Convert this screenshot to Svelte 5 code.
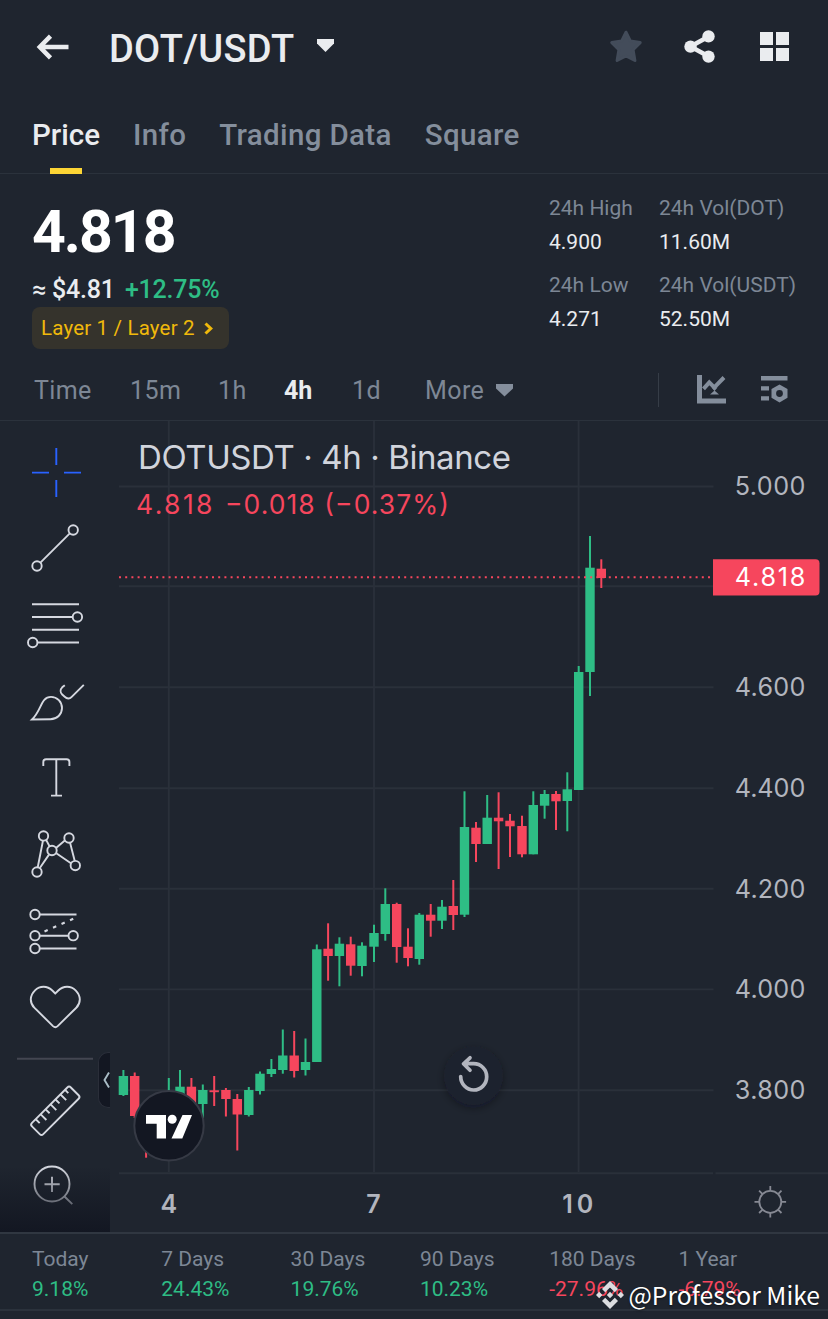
<script>
  const tabs = ['Price', 'Info', 'Trading Data', 'Square'];

  const stats = [
    { label: '24h High', value: '4.900' },
    { label: '24h Vol(DOT)', value: '11.60M' },
    { label: '24h Low', value: '4.271' },
    { label: '24h Vol(USDT)', value: '52.50M' }
  ];

  const intervals = ['Time', '15m', '1h', '4h', '1d', 'More'];

  const periods = [
    { label: 'Today', value: '9.18%' },
    { label: '7 Days', value: '24.43%' },
    { label: '30 Days', value: '19.76%' },
    { label: '90 Days', value: '10.23%' },
    { label: '180 Days', value: '-27.96%' },
    { label: '1 Year', value: '-6.79%' }
  ];

  const priceLines = [
    { y: 486.5, label: '5.000' },
    { y: 586.3, label: '4.800' },
    { y: 687.3, label: '4.600' },
    { y: 788.2, label: '4.400' },
    { y: 888.8, label: '4.200' },
    { y: 989.4, label: '4.000' },
    { y: 1090.2, label: '3.800' }
  ];

  const dayLines = [
    { x: 168.8, label: '4', w: 15 },
    { x: 374, label: '7', w: 14 },
    { x: 578.6, label: '10', w: 31 }
  ];

  // centre x, body top, body bottom, wick top, wick bottom, rising
  const candles = [
    [123.4, 1076, 1095, 1070, 1096, 1],
    [134.7, 1076, 1116, 1072.5, 1118, 0],
    [146.1, 1116, 1140, 1112, 1157.7, 0],
    [168.8, 1095, 1120, 1078, 1125, 1],
    [180, 1086.7, 1110, 1070, 1112, 1],
    [191.4, 1086.7, 1104, 1078, 1106, 0],
    [202.8, 1090, 1104, 1084.5, 1118, 1],
    [214.2, 1090.3, 1092.2, 1076, 1106, 0],
    [225.9, 1090, 1099, 1088, 1116.5, 0],
    [237.3, 1099, 1114.5, 1094, 1150.5, 0],
    [248.8, 1090, 1115, 1087, 1116.5, 1],
    [260, 1073.7, 1091, 1071.5, 1094.5, 1],
    [271.4, 1069, 1074, 1059, 1077, 1],
    [282.8, 1055.5, 1070, 1029.5, 1073.7, 1],
    [294.2, 1055.5, 1071, 1031, 1077.5, 0],
    [305.5, 1062, 1070, 1038.5, 1075.5, 1],
    [316.8, 949.3, 1062, 944.5, 1062, 1],
    [328.1, 948.7, 956, 923.3, 980.7, 0],
    [339.4, 943.7, 956, 937.3, 986.3, 1],
    [350.7, 944.3, 965.7, 936.7, 975.7, 0],
    [362, 945.7, 966, 942.3, 976.3, 1],
    [374, 933, 946.7, 924.7, 962, 1],
    [385.3, 904, 934, 888.3, 940.7, 1],
    [396.7, 904, 947, 902.7, 962.7, 0],
    [408, 946.7, 958, 928.3, 966.3, 0],
    [419.3, 914.7, 959, 913, 964.7, 1],
    [430.7, 914.7, 920.7, 904, 936.7, 0],
    [442, 906.7, 920.7, 900, 929, 1],
    [453.3, 906, 915, 880, 930, 0],
    [464.5, 827, 914.7, 791.3, 917, 1],
    [476, 827.7, 844, 822, 862, 0],
    [487.2, 817.7, 844, 795, 844, 1],
    [498.6, 817.7, 821.3, 792.3, 869, 0],
    [510, 820.7, 826.3, 814, 857, 0],
    [522, 826, 854.3, 815.7, 857.3, 0],
    [533.3, 805, 854.3, 791.3, 854.3, 1],
    [544.6, 794, 805.7, 790, 818.7, 1],
    [556, 794, 801.3, 791, 830, 0],
    [567.3, 789.3, 801, 772.3, 831.3, 1],
    [578.7, 672, 790, 666, 790, 1],
    [590, 567.7, 672, 536, 696, 1],
    [601.3, 568.7, 578, 559.3, 588, 0]
  ];
</script>

<main class="screen">
  <header class="topbar">
    <svg class="back" width="33" height="26" viewBox="0 0 33 26"><path d="M14.5 2.2 3.8 13l10.7 10.8M4 13h28.5" /></svg>
    <h1>DOT/USDT</h1>
    <svg class="caret" width="17" height="13" viewBox="0 0 17 13"><path d="M0 0h17v4.6L8.5 13 0 4.6z" /></svg>
    <div class="actions">
      <svg width="32" height="33" viewBox="0 0 32 33"><path class="star" d="M16 2.2l4.4 8.9 9.8 1.5-7.1 7.1 1.8 10.8L16 26l-8.9 4.5 1.8-10.8-7.1-7.1 9.8-1.5z" /></svg>
      <svg width="31" height="33" viewBox="0 0 31 33"><path class="link" d="M24.7 6.5 6.5 16.5l18.2 10" /><circle cx="24.5" cy="6.4" r="6.2" /><circle cx="6.5" cy="16.6" r="6.2" /><circle cx="24.5" cy="26.6" r="6.2" /></svg>
      <svg width="29" height="29" viewBox="0 0 29 29"><path d="M0 0h13v13H0zM16 0h13v13H16zM0 16h13v13H0zM16 16h13v13H16z" /></svg>
    </div>
  </header>

  <nav class="tabs">
    {#each tabs as tab, i}
      <span class="tab" class:active={i === 0}>{tab}</span>
    {/each}
  </nav>

  <section class="ticker">
    <div class="quote">
      <div class="price">4.818</div>
      <div class="change"><span class="usd">≈ $4.81</span><span class="pct">+12.75%</span></div>
      <div class="tag">
        <span>Layer 1 / Layer 2</span>
        <svg width="9" height="13" viewBox="0 0 9 13"><path d="M1.5 1.5 6.8 6.5 1.5 11.5" /></svg>
      </div>
    </div>
    <div class="stats">
      {#each stats as s}
        <div class="stat">
          <div class="label">{s.label}</div>
          <div class="value">{s.value}</div>
        </div>
      {/each}
    </div>
  </section>

  <nav class="intervals">
    {#each intervals as item}
      <span class="interval i-{item}" class:active={item === '4h'}>{item}</span>
    {/each}
    <svg class="more" width="17" height="13" viewBox="0 0 17 13"><path d="M0 0h17v4.4L8.5 12.5 0 4.4z" /></svg>
    <i class="split"></i>
    <svg class="indicator" width="30" height="30" viewBox="0 0 30 30">
      <path d="M0 0h5v23.500h24V28.500H0z" />
      <path class="line" d="M6.500 13.800 12.300 7.300l5 5L27 2.500" />
      <path d="M13 19.500h9l-4.500-4zM14.500 12.500l3 3.500 3-3.500z" />
    </svg>
    <svg class="settings" width="27" height="28" viewBox="0 0 27 28">
      <path d="M0 0h26.500v4.400H0zM0 10.200h8v4.300H0zM0 20.200h8v4.300H0z" />
      <path fill-rule="evenodd" d="m18.500 8.500 8 4.400v8.900l-8 4.700-8-4.700v-8.900zm0 5.600a3.400 3.400 0 1 0 0 6.800 3.400 3.400 0 0 0 0-6.800z" />
    </svg>
  </nav>

  <section class="chart">
    <aside class="tools">
      <svg class="cross" width="111" height="89" viewBox="0 421 111 89"><path d="M56.3 448v17M56.3 480v17M32 472.6h17M64 472.6h17" /></svg>
      <svg width="111" height="76" viewBox="0 510 111 76"><circle cx="37" cy="566" r="4.7" /><circle cx="73.2" cy="530" r="4.7" /><path d="M40.4 562.6l29.4-29.2" /></svg>
      <svg width="111" height="77" viewBox="0 586 111 77"><path d="M32 604.2h47M32 617h40.5M32 629.8h47M37.5 642.5H79" /><circle cx="77.4" cy="617" r="4.7" /><circle cx="32.7" cy="642.5" r="4.7" /></svg>
      <svg width="111" height="77" viewBox="0 663 111 77"><path d="M32 719.400c10-9.500 8.500-22.500 19-22.500 6.200 0 11 5 11 11.200S57 719.200 50.500 719.200zM64.800 685.200l-2.600 2.100c-2.200 2.200-2 5.200 0 7.200l2.500 2.300c2.300 2.200 5 2.200 7 .1L83.800 684.800" /></svg>
      <svg width="111" height="75" viewBox="0 740 111 75"><path d="M43.300 766v-4c0-2 .8-2.800 2.800-2.800h20.500c2 0 2.800.8 2.800 2.800v4M56.300 759v36.600M51 795.600h11" /></svg>
      <svg width="111" height="77" viewBox="0 815 111 77"><path d="M43 840.500l-5.300 27M46 839.600l3.500 6.600M56 848l8.800-7.500M70 842.500l4.700 18.300M56.300 853.200l14.600 10M49 854.600l-9 13.200" /><circle cx="43.500" cy="835.900" r="4.700" /><circle cx="69" cy="838" r="4.700" /><circle cx="52" cy="850.500" r="4.700" /><circle cx="75.300" cy="865.600" r="4.700" /><circle cx="37" cy="872" r="4.700" /></svg>
      <svg width="111" height="77" viewBox="0 892 111 77"><path d="M40 914.500h36.500M40 935.700h28.500M40 948.500h36.500" /><path class="dots" d="M44.500 931.500l29.500-13" /><circle cx="35" cy="914.500" r="4.700" /><circle cx="35" cy="935.700" r="4.700" /><circle cx="73.200" cy="935.700" r="4.700" /><circle cx="35" cy="948.500" r="4.700" /></svg>
      <svg width="111" height="75" viewBox="0 969 111 75"><path d="M55.300 993.500l-3-3c-5-5-12.500-5-17.300-.2-5.200 5.200-5.700 12.300-.7 17.400l18.700 18.400c1.600 1.500 3 1.500 4.600 0l18.700-18.400c5-5.100 4.500-12.200-.7-17.400-4.800-4.800-12.300-4.800-17.300.2z" /></svg>
      <svg width="111" height="29" viewBox="0 1044 111 29"><path class="rule" d="M17 1058.700h76" /></svg>
      <svg width="111" height="76" viewBox="0 1073 111 76"><g transform="rotate(-45 55.300 1110.800)"><rect x="27.800" y="1102.800" width="55" height="16" rx="2.500" /><path d="M35.500 1103v5.500M42.500 1103v8M49.500 1103v5.500M56.500 1103v8M63.500 1103v5.500M70.500 1103v8M77 1103v4.500" /></g></svg>
      <svg width="111" height="83" viewBox="0 1149 111 83"><circle cx="52" cy="1184" r="17.500" /><path d="M44.500 1184.200h15.200M52 1176.700v15.200M64.500 1196.500l7.800 7.600" /></svg>
      <div class="fade"></div>
      <div class="handle"><svg width="7" height="18" viewBox="0 0 7 18"><path d="M6 1.500 1.500 9 6 16.500" /></svg></div>
    </aside>

    <svg class="plot" width="717" height="811" viewBox="111 421 717 811">
      <defs>
        <filter id="soft" x="-30%" y="-30%" width="160%" height="170%"><feDropShadow dx="0" dy="3" stdDeviation="4" flood-color="#0b0e14" flood-opacity=".38" /></filter>
      </defs>
      <g class="grid">
        {#each priceLines as l}<path d="M119 {l.y}H713.500" />{/each}
        {#each dayLines as l}<path d="M{l.x} 421V1172" />{/each}
        <path d="M119 1173.300H713M715.500 1173.300H828" />
      </g>
      {#each candles as [x, top, bottom, high, low, up]}
        <g class={up ? 'up' : 'down'}>
          <rect x={x - 1} y={high} width="2" height={low - high} />
          <rect x={x - 4.700} y={top} width="9.400" height={bottom - top} />
        </g>
      {/each}
      <path class="last" d="M119 577.300H713" />

      <g class="axis">
        {#each priceLines as l}<text x="734.800" y={l.y + 8.900} textLength="70.500">{l.label}</text>{/each}
      </g>
      <path class="badge" d="M713 559.300h102.500a4 4 0 0 1 4 4v28.200a4 4 0 0 1-4 4H713z" />
      <text class="badge-text" x="734.800" y="586.300" textLength="70.500">4.818</text>
      <g class="days">
        {#each dayLines as l}<text x={l.x - 0.800 - l.w / 2} y="1213" textLength={l.w}>{l.label}</text>{/each}
      </g>

      <text class="symbol" x="138" y="468.500" textLength="373">DOTUSDT · 4h · Binance</text>
      <text class="delta" x="136" y="514" textLength="76.500">4.818</text>
      <text class="delta" x="225" y="514" textLength="224">−0.018 (−0.37%)</text>

      <g class="brand">
        <circle cx="169" cy="1125.800" r="34.700" />
        <path d="M146 1115h20v23.500h-9.300v-14.700H146zM182.500 1115H192l-9.700 23.500h-10.800z" />
        <circle class="dot" cx="172.200" cy="1119.300" r="4.500" />
      </g>
      <g class="reset">
        <circle cx="473.500" cy="1075.500" r="29.500" filter="url(#soft)" />
        <path d="M460.700 1076.500c0 7.500 5.800 13.500 13 13.500 7.200 0 13-6 13-13.300 0-7.200-5.800-13-13-13h-9.500M470 1057.800l-6.500 6 6.500 6.500" />
      </g>
      <g class="gear">
        <circle cx="770.300" cy="1201.800" r="11" />
        <path d="M770.300 1186v4.500M770.300 1213v4.500M754.500 1201.800h4.500M781.600 1201.800h4.500M759.100 1190.600l3.200 3.200M778.300 1209.800l3.200 3.200M781.500 1190.600l-3.200 3.200M762.300 1209.800l-3.200 3.200" />
      </g>
    </svg>
  </section>

  <footer class="periods">
    {#each periods as p}
      <div class="period">
        <div class="label">{p.label}</div>
        <div class="value" class:loss={p.value.startsWith('-')}>{p.value}</div>
      </div>
    {/each}
  </footer>

  <div class="credit">
    <svg width="28" height="28" viewBox="0 0 28 28"><path d="M14 0l8 8-3.200 3.200L14 6.400l-4.800 4.800L6 8zM14 28l8-8-3.200-3.200-4.800 4.800-4.800-4.800L6 20zM3.200 10.800 6.400 14l-3.200 3.200L0 14zM24.800 10.800 28 14l-3.200 3.200-3.200-3.200zM14 10.800l3.200 3.200-3.200 3.200-3.200-3.200z" /></svg>
    <span>@Professor Mike</span>
  </div>
</main>

<style>
  :global(body) { background: #1f252f; }
  .screen {
    position: relative;
    width: 828px;
    height: 1319px;
    overflow: hidden;
    background: #1f252f;
    color: #eaecef;
    font-family: Roboto, "Noto Sans", sans-serif;
  }
  svg { display: block; flex: none; }

  .topbar { display: flex; align-items: center; height: 96px; box-sizing: border-box; padding: 0 39px 3px 36px; fill: #eaecef; }
  .back { fill: none; stroke: #eaecef; stroke-width: 4.500; }
  h1 { margin: 4px 0 0 40px; width: 184px; font-size: 38px; line-height: 48px; font-weight: 500; letter-spacing: 0.3px; white-space: nowrap; }
  .caret { margin: -2px 0 0 24px; }
  .actions { display: flex; align-items: center; gap: 45px; margin-left: auto; }
  .actions svg:first-child { margin-right: -3px; }
  .star { fill: #434c5a; stroke: #434c5a; stroke-width: 3; stroke-linejoin: round; }
  .link { fill: none; stroke: #eaecef; stroke-width: 4.500; }

  .tabs { display: flex; gap: 33px; height: 77px; padding-left: 32px; border-bottom: 1px solid #2b323c; }
  .tab { position: relative; height: 77px; line-height: 78px; font-size: 29.500px; font-weight: 500; letter-spacing: 0.350px; color: #848e9c; white-space: nowrap; }
  .tab.active { color: #eaecef; letter-spacing: 0; }
  .tab.active::after { content: ''; position: absolute; left: 18px; bottom: -1px; width: 32px; height: 6px; background: #fcd535; }

  .ticker { display: flex; justify-content: space-between; height: 186px; padding: 0 0 0 32px; }
  .price { margin-top: 26px; height: 64px; line-height: 64px; font-size: 59px; font-weight: 700; color: #fff; letter-spacing: -2px; }
  .change { display: flex; gap: 10px; height: 33px; margin-top: 8px; line-height: 35px; font-size: 25px; font-weight: 500; letter-spacing: -0.200px; white-space: nowrap; }
  .pct { color: #2ebd85; }
  .tag { display: flex; align-items: center; gap: 9px; width: 188px; height: 42px; margin-top: 2px; padding-left: 9px; border-radius: 8px; background: #35332c; color: #f0b90b; font-size: 20.500px; letter-spacing: 0.180px; white-space: nowrap; }
  .tag svg { fill: none; stroke: #f0b90b; stroke-width: 3; }
  .stats { display: grid; grid-template-columns: 110px 169px; grid-template-rows: 77px 77px; align-content: start; padding-top: 17px; }
  .stat { line-height: 34px; font-size: 21px; white-space: nowrap; }
  .label { color: #7d8795; }

  .intervals { display: flex; align-items: center; height: 60px; padding-left: 34px; border-bottom: 1px solid #2b323c; font-size: 25px; color: #7d8795; fill: #848e9c; }
  .interval { flex: none; width: 65px; letter-spacing: 0.400px; }
  .i-Time { width: 96px; }
  .i-15m { width: 88px; }
  .i-4h { width: 69px; }
  .i-1d { width: 73px; }
  .i-More { width: 71px; }
  .interval.active { color: #eaecef; font-weight: 700; letter-spacing: 0; text-indent: 1px; }
  .split { width: 1px; height: 34px; margin: 0 38px 0 145px; background: #363d47; }
  .indicator .line { fill: none; stroke: #848e9c; stroke-width: 4; }
  .settings { margin-left: 34px; }

  .chart { display: flex; height: 811px; }
  .tools { position: relative; width: 111px; fill: none; stroke: #d5d8e0; stroke-width: 1.900; }
  .cross { stroke: #2962ff; }
  .dots { stroke-width: 2.200; stroke-dasharray: 3.500 5.800; }
  .rule { stroke: #434651; }
  .fade { position: absolute; left: 0; bottom: 0; width: 110px; height: 66px; background: linear-gradient(transparent, #131722); }
  .handle { position: absolute; left: 98px; top: 631px; display: flex; align-items: center; justify-content: flex-end; width: 12px; height: 56px; box-sizing: border-box; border: 1.500px solid #2a2e39; border-right: 0; border-radius: 10px 0 0 10px; background: #131722; stroke: #a9bcc6; }

  .grid { stroke: #2a303a; stroke-width: 1.900; fill: none; }
  .up { fill: #2ebd85; }
  .down { fill: #f6465d; }
  .last { stroke: #f6465d; stroke-width: 2; stroke-dasharray: 2 4.200; }
  .plot text { font-family: Inter, sans-serif; }
  .axis, .badge-text { font-size: 25.200px; fill: #b2b5be; }
  .badge { fill: #f6465d; }
  .plot .badge-text { fill: #fff; }
  .days { font-size: 25px; font-weight: 600; fill: #b2b5be; }
  .symbol { font-size: 33px; fill: #d1d4dc; }
  .delta { font-size: 26.500px; fill: #f6465d; }
  .brand { fill: #fff; }
  .brand circle:first-child { fill: #131722; stroke: #363a45; stroke-width: 2; }
  .reset circle { fill: #1e222d; }
  .reset path { fill: none; stroke: #b2b5be; stroke-width: 3.700; stroke-linecap: round; stroke-linejoin: round; }
  .gear { fill: none; stroke: #868993; stroke-width: 1.800; }

  .periods { display: grid; grid-template-columns: repeat(6, 129.300px); height: 65px; padding: 10px 0 0 32px; border-top: 2px solid #303741; border-bottom: 2px solid #2b323c; }
  .period { line-height: 30px; font-size: 21px; white-space: nowrap; }
  .period .value { color: #2ebd85; }
  .period .loss { color: #f6465d; }

  .credit { position: absolute; right: 8px; bottom: 7px; display: flex; align-items: center; gap: 4px; height: 36px; color: #fff; font: 24.700px/36px "Noto Sans CJK SC", sans-serif; white-space: nowrap; text-shadow: 0 1px 2px #0008; }
  .credit svg { margin-top: 1px; fill: #dcdde0; }
</style>
